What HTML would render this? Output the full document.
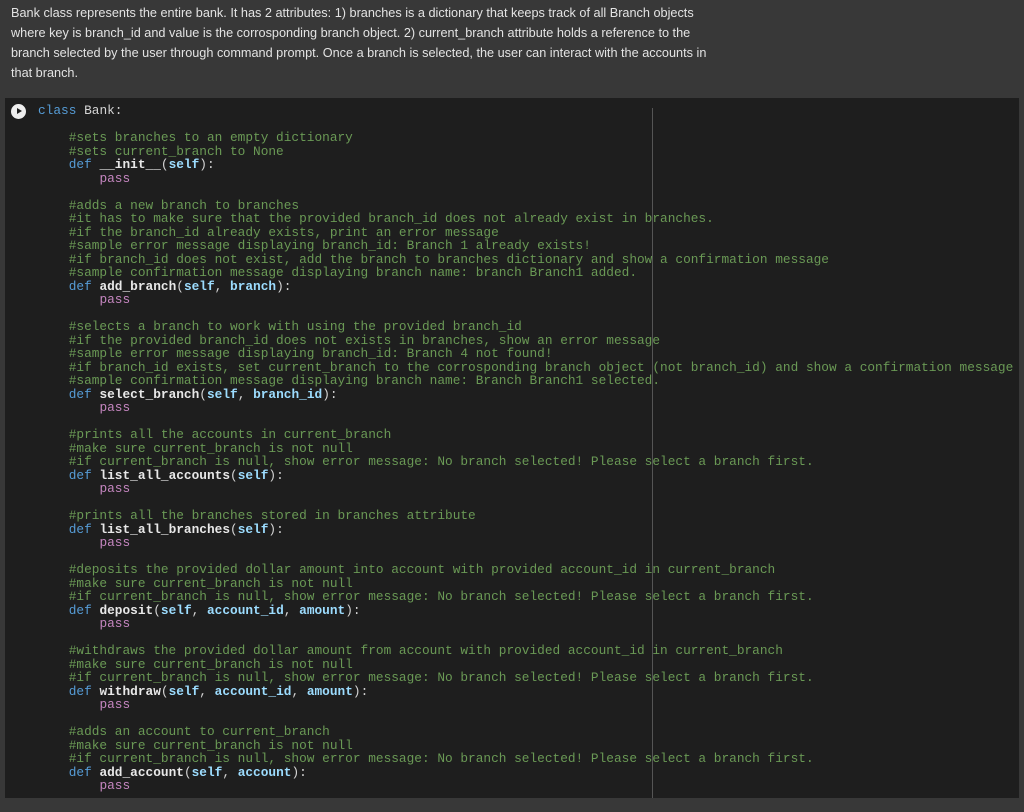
<!DOCTYPE html>
<html><head><style>
body{margin:0;background:#383838;width:1024px;height:812px;overflow:hidden}
.md{position:absolute;left:11px;top:3px;width:760px;font:12.7px/20px "Liberation Sans",sans-serif;color:#e3e3e3;white-space:nowrap}
.cell{position:absolute;left:5px;top:98px;width:1014px;height:700px;background:#1e1e1e}
.ruler{position:absolute;left:652px;top:108px;width:1px;height:690px;background:#555}
.run{position:absolute;left:11px;top:104px;width:15px;height:15px;border-radius:50%;background:#eee}
.run:after{content:"";position:absolute;left:6px;top:4px;border-left:5px solid #1e1e1e;border-top:3.5px solid transparent;border-bottom:3.5px solid transparent}
pre{position:absolute;left:38px;top:104px;margin:0;font:12.8px/13.5px "Liberation Mono",monospace;color:#d4d4d4}
.k{color:#569cd6}.c{color:#6a9955}.p{color:#c586c0}.s{color:#9cdcfe;font-weight:bold}.f{color:#e8e8e8;font-weight:bold}
</style></head><body>
<div class="md">Bank class represents the entire bank. It has 2 attributes: 1) branches is a dictionary that keeps track of all Branch objects<br>where key is branch_id and value is the corrosponding branch object. 2) current_branch attribute holds a reference to the<br>branch selected by the user through command prompt. Once a branch is selected, the user can interact with the accounts in<br>that branch.</div>
<div class="cell"></div><div class="ruler"></div><div class="run"></div>
<pre><span class="k">class</span> Bank:

    <span class="c">#sets branches to an empty dictionary</span>
    <span class="c">#sets current_branch to None</span>
    <span class="k">def</span> <span class="f">__init__</span>(<span class="s">self</span>):
        <span class="p">pass</span>

    <span class="c">#adds a new branch to branches</span>
    <span class="c">#it has to make sure that the provided branch_id does not already exist in branches.</span>
    <span class="c">#if the branch_id already exists, print an error message</span>
    <span class="c">#sample error message displaying branch_id: Branch 1 already exists!</span>
    <span class="c">#if branch_id does not exist, add the branch to branches dictionary and show a confirmation message</span>
    <span class="c">#sample confirmation message displaying branch name: branch Branch1 added.</span>
    <span class="k">def</span> <span class="f">add_branch</span>(<span class="s">self</span>, <span class="s">branch</span>):
        <span class="p">pass</span>

    <span class="c">#selects a branch to work with using the provided branch_id</span>
    <span class="c">#if the provided branch_id does not exists in branches, show an error message</span>
    <span class="c">#sample error message displaying branch_id: Branch 4 not found!</span>
    <span class="c">#if branch_id exists, set current_branch to the corrosponding branch object (not branch_id) and show a confirmation message</span>
    <span class="c">#sample confirmation message displaying branch name: Branch Branch1 selected.</span>
    <span class="k">def</span> <span class="f">select_branch</span>(<span class="s">self</span>, <span class="s">branch_id</span>):
        <span class="p">pass</span>

    <span class="c">#prints all the accounts in current_branch</span>
    <span class="c">#make sure current_branch is not null</span>
    <span class="c">#if current_branch is null, show error message: No branch selected! Please select a branch first.</span>
    <span class="k">def</span> <span class="f">list_all_accounts</span>(<span class="s">self</span>):
        <span class="p">pass</span>

    <span class="c">#prints all the branches stored in branches attribute</span>
    <span class="k">def</span> <span class="f">list_all_branches</span>(<span class="s">self</span>):
        <span class="p">pass</span>

    <span class="c">#deposits the provided dollar amount into account with provided account_id in current_branch</span>
    <span class="c">#make sure current_branch is not null</span>
    <span class="c">#if current_branch is null, show error message: No branch selected! Please select a branch first.</span>
    <span class="k">def</span> <span class="f">deposit</span>(<span class="s">self</span>, <span class="s">account_id</span>, <span class="s">amount</span>):
        <span class="p">pass</span>

    <span class="c">#withdraws the provided dollar amount from account with provided account_id in current_branch</span>
    <span class="c">#make sure current_branch is not null</span>
    <span class="c">#if current_branch is null, show error message: No branch selected! Please select a branch first.</span>
    <span class="k">def</span> <span class="f">withdraw</span>(<span class="s">self</span>, <span class="s">account_id</span>, <span class="s">amount</span>):
        <span class="p">pass</span>

    <span class="c">#adds an account to current_branch</span>
    <span class="c">#make sure current_branch is not null</span>
    <span class="c">#if current_branch is null, show error message: No branch selected! Please select a branch first.</span>
    <span class="k">def</span> <span class="f">add_account</span>(<span class="s">self</span>, <span class="s">account</span>):
        <span class="p">pass</span></pre>
</body></html>
